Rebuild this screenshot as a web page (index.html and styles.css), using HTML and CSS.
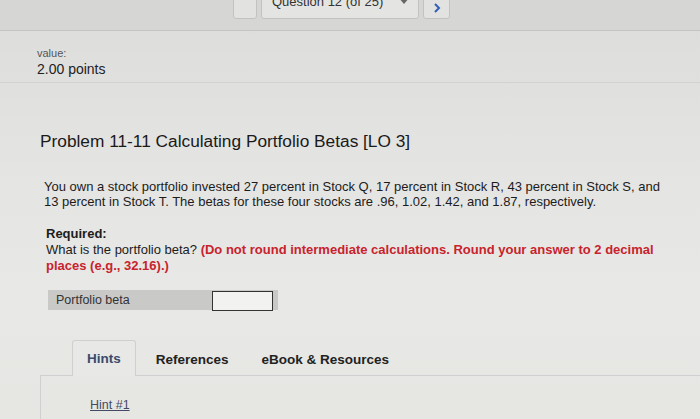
FILE: index.html
```html
<!DOCTYPE html>
<html>
<head>
<meta charset="utf-8">
<link rel="stylesheet" href="styles.css">
</head>
<body>
<div class="topbar">
  <div class="nav">
    <div class="btn prev"></div>
    <div class="select"><span class="qtext">Question 12 (of 25)</span><span class="caret"></span></div>
    <div class="btn next"><svg width="10" height="12" viewBox="0 0 10 12"><path d="M3 2 L7 6 L3 10" fill="none" stroke="#2f5fb8" stroke-width="2"/></svg></div>
  </div>
</div>
<div class="valuebox">
  <div class="vlabel">value:</div>
  <div class="vpoints">2.00 points</div>
</div>
<div class="content">
  <h1 class="title">Problem 11-11 Calculating Portfolio Betas [LO 3]</h1>
  <p class="para">You own a stock portfolio invested 27 percent in Stock Q, 17 percent in Stock R, 43 percent in Stock S, and 13 percent in Stock T. The betas for these four stocks are .96, 1.02, 1.42, and 1.87, respectively.</p>
  <div class="req">
    <div class="reqhead">Required:</div>
    <p class="reqtext">What is the portfolio beta? <b class="red">(Do not round intermediate calculations. Round your answer to 2 decimal places (e.g., 32.16).)</b></p>
  </div>
  <div class="answer">
    <span class="alabel">Portfolio beta</span>
    <span class="ainput"></span>
  </div>
  <div class="tabs">
    <div class="tab active">Hints</div>
    <div class="tab">References</div>
    <div class="tab">eBook &amp; Resources</div>
  </div>
  <div class="panel">
    <a class="hint">Hint #1</a>
  </div>
</div>
</body>
</html>
```
FILE: styles.css
```css
html, body { margin: 0; padding: 0; }
body {
  width: 700px;
  height: 419px;
  overflow: hidden;
  background: linear-gradient(180deg, #dcdcdb 0%, #e4e4e2 40%, #e8e8e6 70%, #e6e7e3 100%);
  font-family: "Liberation Sans", Arial, sans-serif;
  color: #1c1c1c;
}
.topbar {
  height: 30px;
  background: #d6d6d5;
  border-bottom: 1px solid #c4c4c4;
  overflow: hidden;
}
.nav {
  display: flex;
  gap: 4px;
  padding-left: 233px;
  margin-top: -12px;
}
.btn {
  width: 24px;
  height: 31px;
  border: 1px solid #c2c2c2;
  border-radius: 3px;
  background: #e2e2e1;
  display: flex;
  align-items: center;
  justify-content: center;
  box-sizing: border-box;
}
.btn.next { width: 27px; padding-top: 8px; }
.select {
  width: 158px;
  height: 31px;
  border: 1px solid #c2c2c2;
  border-radius: 3px;
  background: #e4e4e3;
  display: flex;
  align-items: flex-end;
  justify-content: space-between;
  padding: 0 8px 14px 10px;
  box-sizing: border-box;
  font-size: 13px;
  color: #333;
}
.qtext { line-height: 13px; margin-bottom: -4px; }
.caret {
  width: 0; height: 0;
  border-left: 6px solid transparent;
  border-right: 6px solid transparent;
  border-top: 7px solid #666;
}
.valuebox {
  padding: 15px 0 0 37px;
  height: 36px;
  border-bottom: 1px solid #d2d2d2;
}
.vlabel { font-size: 11px; color: #555; line-height: 14px; }
.vpoints { font-size: 14px; color: #222; line-height: 18px; }
.content { padding-left: 40px; }
.title {
  margin: 47px 0 0 0;
  font-size: 17.3px;
  font-weight: normal;
  color: #1a1a1a;
  line-height: 22px;
}
.para {
  margin: 27px 0 0 4px;
  width: 626px;
  font-size: 13px;
  line-height: 15px;
}
.req { margin: 17px 0 0 6px; font-size: 13px; line-height: 16px; width: 620px; }
.reqhead { font-weight: bold; }
.reqtext { margin: 0; }
.red { color: #c8232c; }
.answer {
  margin: 16px 0 0 8px;
  width: 230px;
  height: 20px;
  background: #c9c9c8;
  display: flex;
  align-items: center;
  justify-content: space-between;
  padding-left: 8px;
  box-sizing: border-box;
  font-size: 12.5px;
  color: #333;
}
.ainput {
  width: 59px;
  height: 18px;
  background: #f2f2f0;
  border: 1px solid #333;
  margin-right: 5px;
  margin-top: 2px;
}
.tabs {
  display: flex;
  margin: 30px 0 0 32px;
  align-items: flex-end;
}
.tab {
  font-size: 13.5px;
  font-weight: bold;
  color: #222;
  padding: 0 13px 9px 20px;
}
.tab.active {
  color: #3b4b6b;
  border: 1px solid #d0d0d0;
  border-bottom: none;
  border-radius: 3px 3px 0 0;
  padding: 10px 14px 10px 14px;
  background: #e8e8e6;
}
.panel {
  border-top: 1px solid #d0d0d0;
  border-left: 1px solid #d0d0d0;
  margin-top: -1px;
  padding: 19px 0 0 49px;
  height: 40px;
}
.hint {
  font-size: 12.5px;
  color: #444a66;
  text-decoration: underline;
}
```
